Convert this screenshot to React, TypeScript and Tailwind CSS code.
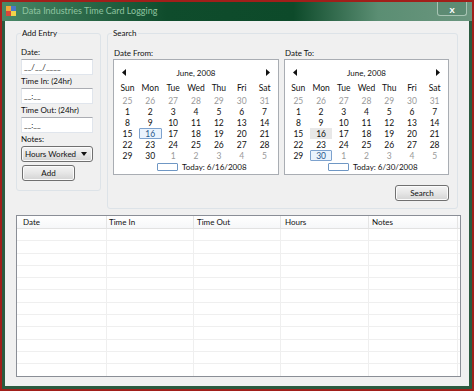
import React from "react";

const days = ["Sun", "Mon", "Tue", "Wed", "Thu", "Fri", "Sat"];
const weeks = [
  [25, 26, 27, 28, 29, 30, 31],
  [1, 2, 3, 4, 5, 6, 7],
  [8, 9, 10, 11, 12, 13, 14],
  [15, 16, 17, 18, 19, 20, 21],
  [22, 23, 24, 25, 26, 27, 28],
  [29, 30, 1, 2, 3, 4, 5],
];
const cols = [
  { name: "Date", w: "w-[90px] pl-[6px]" },
  { name: "Time In", w: "w-[87px] pl-[2px]" },
  { name: "Time Out", w: "w-[87px] pl-[3px]" },
  { name: "Hours", w: "w-[88px] pl-[4px]" },
  { name: "Notes", w: "w-[89px] pl-[3px]" },
];

function Arrow({ left }: { left?: boolean }) {
  return (
    <svg width="4" height="7" viewBox="0 0 4 7">
      <path d={left ? "M4 0 L0 3.5 L4 7 Z" : "M0 0 L4 3.5 L0 7 Z"} fill="#111" />
    </svg>
  );
}

function Calendar({
  label,
  width,
  selected,
  todayCell,
  todayText,
}: {
  label: string;
  width: string;
  selected: number;
  todayCell?: number;
  todayText: string;
}) {
  return (
    <div className="flex flex-col">
      <div className="h-[11px] leading-[11px] pl-px">{label}</div>
      <div className={`${width} h-[116px] border border-[#a9adb3] bg-white flex flex-col px-[2px] pt-[3px]`}>
        <div className="h-[19px] flex items-center justify-between px-[6px]">
          <Arrow left />
          <span>June, 2008</span>
          <Arrow />
        </div>
        <div className="grid grid-cols-7 h-[13px] items-center text-center text-[8.5px]">
          {days.map((d) => (
            <div key={d}>{d}</div>
          ))}
        </div>
        {weeks.map((wk, r) => (
          <div key={r} className="grid grid-cols-7 h-[11px] text-center leading-[10px] text-[8.5px]">
            {wk.map((n, c) => {
              const gray = r === 0 || (r === 5 && c >= 2);
              const isSel = !gray && n === selected;
              const isToday = !gray && n === todayCell;
              let cls = gray ? "text-[#9a9a9a]" : "text-[#111]";
              if (isSel)
                cls = "border border-[#7da2ce] bg-[#eaf3fd] text-[#2a5a8c] rounded-[1px]";
              else if (isToday) cls = "bg-[#e8e8e8] text-[#111] border border-transparent";
              else cls += " border border-transparent";
              return (
                <div key={c} className={`h-[11px] ${cls}`}>
                  {n}
                </div>
              );
            })}
          </div>
        ))}
        <div className="h-[12px] flex items-center pl-[41px] gap-[4px]">
          <div className="w-[21px] h-[8px] border border-[#6f97c4] rounded-[1px] bg-white" />
          <span>{todayText}</span>
        </div>
      </div>
    </div>
  );
}

function TextBox({ value }: { value: string }) {
  return (
    <div className="w-[72px] h-[16px] bg-white border border-[#e0e5ec] border-t-[#abadb3] pl-[2px] leading-[15px]">
      {value}
    </div>
  );
}

const btn =
  "h-[16px] border border-[#707070] rounded-[3px] bg-linear-to-b from-[#f4f4f4] via-[#e6e6e6] to-[#d3d3d3] shadow-[inset_0_0_0_1px_#fbfbfb]";

export default function App() {
  return (
    <div className="w-[474px] h-[391px] bg-[#a11f1a] p-[2px] text-[8px] text-[#111] font-['Lato','Liberation_Sans',sans-serif]">
      <div className="h-full flex flex-col bg-[#2b5a3f]">
        <div className="h-[19px] flex items-start bg-[linear-gradient(90deg,#4a8868_0%,#2f6c4c_15%,#0f4c2c_35%,#0d4a2a_62%,#5b8e73_80%,#6b967f_100%)]">
          <div className="flex items-center h-[17px] pl-[4px] gap-[6px]">
            <svg width="10" height="10" viewBox="0 0 10 10">
              <rect x="0" y="0" width="5" height="5" fill="#f0a838" />
              <rect x="5" y="0" width="5" height="5" fill="#4a78c8" />
              <rect x="0" y="5" width="5" height="5" fill="#d8483a" />
              <rect x="5" y="5" width="5" height="5" fill="#f2d24a" />
            </svg>
            <span className="text-[#8fc4a0] text-[9px]">Data Industries Time Card Logging</span>
          </div>
          <div className="ml-auto mr-[5px] w-[30px] h-[14px] border border-t-0 border-[#a8c4b4] rounded-b-[3px] bg-[#5d8b73] flex items-center justify-center text-white font-bold text-[10px] leading-none">
            x
          </div>
        </div>
        <div className="flex-1 mx-[3px] mb-[3px] bg-[#f0f0f0] flex flex-col pl-[11px] pt-[12px]">
          <div className="flex items-start gap-[6px]">
            <div className="relative w-[85px] h-[158px] border border-[#dde3e8] rounded-[3px]">
              <span className="absolute left-[4px] -top-[6px] px-px bg-[#f0f0f0] leading-[11px]">Add Entry</span>
              <div className="flex flex-col pl-[4px] pt-[12px]">
                <div className="h-[13px] leading-[13px]">Date:</div>
                <TextBox value="__/__/____" />
                <div className="h-[13px] leading-[13px]">Time In: (24hr)</div>
                <TextBox value="__:__" />
                <div className="h-[13px] leading-[13px]">Time Out: (24hr)</div>
                <TextBox value="__:__" />
                <div className="h-[13px] leading-[13px]">Notes:</div>
                <div className={`${btn} w-[72px] flex items-center justify-between pl-[3px] pr-[5px] whitespace-nowrap`}>
                  <span>Hours Worked</span>
                  <svg width="6" height="4" viewBox="0 0 6 4">
                    <path d="M0 0 L6 0 L3 4 Z" fill="#111" />
                  </svg>
                </div>
                <div className={`${btn} w-[53px] ml-px mt-[3px] flex items-center justify-center`}>Add</div>
              </div>
            </div>
            <div className="relative w-[351px] h-[176px] border border-[#dde3e8] rounded-[3px]">
              <span className="absolute left-[4px] -top-[6px] px-px bg-[#f0f0f0] leading-[11px]">Search</span>
              <div className="flex flex-col pl-[5px] pt-[14px] w-fit">
                <div className="flex gap-[5px]">
                  <Calendar label="Date From:" width="w-[166px]" selected={16} todayText="Today: 6/16/2008" />
                  <Calendar
                    label="Date To:"
                    width="w-[165px]"
                    selected={30}
                    todayCell={16}
                    todayText="Today: 6/30/2008"
                  />
                </div>
                <div className="flex justify-end mt-[10px]">
                  <div className={`${btn} w-[54px] flex items-center justify-center`}>Search</div>
                </div>
              </div>
            </div>
          </div>
          <div className="mt-[6px] w-[445px] h-[162px] border border-[#8a8e96] bg-white flex flex-col overflow-hidden">
            <div className="h-[18px] flex border-b border-[#e2e2e2] bg-linear-to-b from-white to-[#f6f7f9]">
              {cols.map((c) => (
                <div key={c.name} className={`${c.w} h-full flex items-center border-r border-[#e5e5e5]`}>
                  {c.name}
                </div>
              ))}
            </div>
            {Array.from({ length: 12 }).map((_, i) => (
              <div key={i} className="h-[12.3px] shrink-0 flex border-b border-[#efefef]">
                {cols.map((c) => (
                  <div key={c.name} className={`${c.w} h-full border-r border-[#efefef]`} />
                ))}
              </div>
            ))}
          </div>
        </div>
      </div>
    </div>
  );
}
